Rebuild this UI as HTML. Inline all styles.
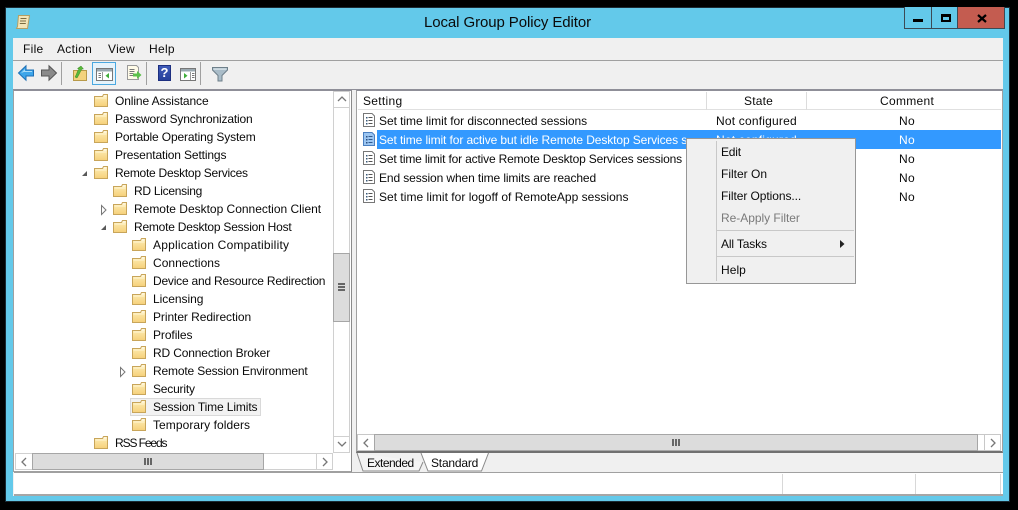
<!DOCTYPE html>
<html><head><meta charset="utf-8"><style>
html,body{margin:0;padding:0;background:#000;width:1018px;height:510px;overflow:hidden}
body{position:relative;font:12px "Liberation Sans",sans-serif;color:#000}
.a{position:absolute;box-sizing:border-box}
.t{position:absolute;white-space:nowrap;line-height:16px;letter-spacing:.3px;color:#0a0a0a}
svg{position:absolute;overflow:visible}
</style></head><body>
<svg width="0" height="0" style="position:absolute">
<defs>
<linearGradient id="fg" x1="0" y1="0" x2="0" y2="1"><stop offset="0" stop-color="#fdeeb8"/><stop offset="1" stop-color="#f6d07a"/></linearGradient>
<symbol id="f" viewBox="0 0 14 13"><path d="M.5 2.500h8l1-2h4v12H.5z" fill="url(#fg)" stroke="#c8a55a"/><path d="M1.500 3.500h11v1h-11z" fill="#fff6d4"/><path d="M9.500 1.500h3v1h-3z" fill="#fff"/></symbol>
<symbol id="d" viewBox="0 0 12 14"><path d="M.5.500h8.500l2.500 2.500v10.500H.5z" fill="#fff" stroke="#777"/><path d="M3 4h1.500v1.500H3zM3 7h1.500v1.500H3zM3 10h1.500v1.500H3z" fill="#3a5a7a"/><path d="M5.500 4.500h4M5.500 7.500h4M5.500 10.500h4" stroke="#555"/></symbol>
</defs></svg>

<!-- window -->
<div class="a" style="left:5px;top:7px;width:1005px;height:495px;background:#63c9ea;border:1px solid #1b2a33"></div>
<svg style="left:15px;top:15px" width="16" height="16" viewBox="0 0 16 16"><path d="M3.500.5h11l-2 13h-11l1-2z" fill="#f3e5b8" stroke="#b59f63"/><path d="M5.500 3.500h6M5 6h6M4.800 8.500h6" stroke="#7c6c40"/></svg>
<div class="t" style="left:424px;top:14px;font-size:15px;line-height:18px;letter-spacing:-.09px">Local Group Policy Editor</div>

<!-- caption buttons -->
<div class="a" style="left:904px;top:7px;width:28px;height:22px;background:#63c9ea;border:1px solid #3c4a55;border-top:0"></div>
<div class="a" style="left:931px;top:7px;width:27px;height:22px;background:#63c9ea;border:1px solid #3c4a55;border-top:0"></div>
<div class="a" style="left:958px;top:7px;width:47px;height:22px;background:#c45c50;border:1px solid #3c4a55;border-top:0;border-left:0"></div>
<div class="a" style="left:913px;top:19px;width:10px;height:3px;background:#000"></div>
<div class="a" style="left:941px;top:14px;width:10px;height:8px;border:2px solid #000;border-top-width:3px"></div>
<svg style="left:977px;top:14px" width="10" height="9"><path d="M1 1l8 7M9 1l-8 7" stroke="#000" stroke-width="2.200"/></svg>

<!-- client -->
<div class="a" style="left:13px;top:38px;width:990px;height:458px;background:#f0f0f0"></div>
<div class="t" style="left:23px;top:41px">File</div>
<div class="t" style="left:57px;top:41px">Action</div>
<div class="t" style="left:108px;top:41px">View</div>
<div class="t" style="left:149px;top:41px">Help</div>
<div class="a" style="left:13px;top:60px;width:990px;height:1px;background:#a0a0a0"></div>
<div class="a" style="left:13px;top:89px;width:990px;height:1px;background:#8f8f98"></div>

<!-- toolbar -->
<svg style="left:18px;top:65px" width="16" height="16"><path d="M.5 8L8 .8V5h7.500v6H8v4.200z" fill="#3ea6ea" stroke="#1d6fb5"/><path d="M3 8l4-4v2h7v1H6z" fill="#a8dcf8"/></svg>
<svg style="left:41px;top:65px" width="16" height="16"><path d="M15.500 8L8 .8V5H.5v6H8v4.200z" fill="#8a8a8a" stroke="#555"/></svg>
<div class="a" style="left:61px;top:62px;width:1px;height:23px;background:#a0a0a0"></div>
<svg style="left:73px;top:65px" width="14" height="16"><path d="M.5 5.500h13v10H.5z" fill="#f3d27c" stroke="#b89a4a"/><path d="M2 12C4 9 4 6 6 4L4.500 3.500 8 1l2.500 3L9 4C7.500 6 6.500 9 4 13z" fill="#57b83a" stroke="#3a8a22" stroke-width=".5"/></svg>
<div class="a" style="left:92px;top:62px;width:24px;height:23px;background:#e5f3fb;border:1px solid #4aa8e0"></div>
<svg style="left:96px;top:68px" width="17" height="13"><path d="M.5.500h16v12H.5z" fill="#fff" stroke="#777"/><path d="M1 1h15v2.500H1z" fill="#9aa8b0"/><path d="M6.500 4v8" stroke="#999"/><path d="M2.500 5.500h2.500M2.500 7.500h2.500M2.500 9.500h2.500" stroke="#777"/><path d="M13 5v5.500L9.500 7.800z" fill="#3fae3a"/></svg>
<svg style="left:126px;top:65px" width="16" height="16"><path d="M1.500.5h9l2 2v12h-11z" fill="#fffbe8" stroke="#999"/><path d="M3.500 4.500h5M3.500 6.500h5M3.500 8.500h4M3.500 10.500h4" stroke="#777"/><path d="M7 8.500h4V6l4.500 4L11 14v-2.500H7z" fill="#5cc04a"/></svg>
<div class="a" style="left:146px;top:62px;width:1px;height:23px;background:#a0a0a0"></div>
<div class="a" style="left:158px;top:65px;width:13px;height:16px;background:linear-gradient(#3f5bb8,#27409a);border:1px solid #1d2f80;color:#fff;font:bold 13px/14px 'Liberation Sans',sans-serif;text-align:center">?</div>
<svg style="left:180px;top:68px" width="16" height="13"><path d="M.5.500h15v12H.5z" fill="#fff" stroke="#777"/><path d="M1 1h14v2.500H1z" fill="#9aa8b0"/><path d="M10.500 4v8" stroke="#999"/><path d="M12 5.500h2.500M12 7.500h2.500M12 9.500h2.500" stroke="#777"/><path d="M4 5v5.500L7.500 7.800z" fill="#3fae3a"/></svg>
<div class="a" style="left:200px;top:62px;width:1px;height:23px;background:#a0a0a0"></div>
<svg style="left:212px;top:67px" width="16" height="15"><path d="M.5.500h15v2.500L10 8.500v5.500H6V8.500L.5 3z" fill="#a9bcc8" stroke="#6e7f8a"/><path d="M1.500 1.500h13v1.200h-13z" fill="#dfe7ec"/></svg>

<!-- left pane -->
<div class="a" style="left:13px;top:90px;width:339px;height:382px;background:#fff;border:1px solid #a0a0a0;border-top-color:#8f8f98;border-right-color:#8a8a8a"></div>
<div class="a" style="left:130px;top:398px;width:131px;height:18px;background:#f2f2f2;border:1px solid #d9d9d9"></div>

<svg style="left:94px;top:94px" width="14" height="13"><use href="#f"/></svg><div class="t" style="left:115px;top:93px;letter-spacing:-.11px">Online Assistance</div>
<svg style="left:94px;top:112px" width="14" height="13"><use href="#f"/></svg><div class="t" style="left:115px;top:111px;letter-spacing:-.16px">Password Synchronization</div>
<svg style="left:94px;top:130px" width="14" height="13"><use href="#f"/></svg><div class="t" style="left:115px;top:129px;letter-spacing:-.14px">Portable Operating System</div>
<svg style="left:94px;top:148px" width="14" height="13"><use href="#f"/></svg><div class="t" style="left:115px;top:147px;letter-spacing:-.13px">Presentation Settings</div>
<svg style="left:94px;top:166px" width="14" height="13"><use href="#f"/></svg><div class="t" style="left:115px;top:165px;letter-spacing:-.26px">Remote Desktop Services</div>
<svg style="left:113px;top:184px" width="14" height="13"><use href="#f"/></svg><div class="t" style="left:134px;top:183px;letter-spacing:-.28px">RD Licensing</div>
<svg style="left:113px;top:202px" width="14" height="13"><use href="#f"/></svg><div class="t" style="left:134px;top:201px;letter-spacing:-.01px">Remote Desktop Connection Client</div>
<svg style="left:113px;top:220px" width="14" height="13"><use href="#f"/></svg><div class="t" style="left:134px;top:219px;letter-spacing:-.22px">Remote Desktop Session Host</div>
<svg style="left:132px;top:238px" width="14" height="13"><use href="#f"/></svg><div class="t" style="left:153px;top:237px;letter-spacing:.22px">Application Compatibility</div>
<svg style="left:132px;top:256px" width="14" height="13"><use href="#f"/></svg><div class="t" style="left:153px;top:255px;letter-spacing:.03px">Connections</div>
<svg style="left:132px;top:274px" width="14" height="13"><use href="#f"/></svg><div class="t" style="left:153px;top:273px;letter-spacing:-.21px">Device and Resource Redirection</div>
<svg style="left:132px;top:292px" width="14" height="13"><use href="#f"/></svg><div class="t" style="left:153px;top:291px;letter-spacing:-.03px">Licensing</div>
<svg style="left:132px;top:310px" width="14" height="13"><use href="#f"/></svg><div class="t" style="left:153px;top:309px;letter-spacing:-.07px">Printer Redirection</div>
<svg style="left:132px;top:328px" width="14" height="13"><use href="#f"/></svg><div class="t" style="left:153px;top:327px;letter-spacing:-.08px">Profiles</div>
<svg style="left:132px;top:346px" width="14" height="13"><use href="#f"/></svg><div class="t" style="left:153px;top:345px;letter-spacing:-.15px">RD Connection Broker</div>
<svg style="left:132px;top:364px" width="14" height="13"><use href="#f"/></svg><div class="t" style="left:153px;top:363px;letter-spacing:-.16px">Remote Session Environment</div>
<svg style="left:132px;top:382px" width="14" height="13"><use href="#f"/></svg><div class="t" style="left:153px;top:381px;letter-spacing:-.2px">Security</div>
<svg style="left:132px;top:400px" width="14" height="13"><use href="#f"/></svg><div class="t" style="left:153px;top:399px;letter-spacing:-.12px">Session Time Limits</div>
<svg style="left:132px;top:418px" width="14" height="13"><use href="#f"/></svg><div class="t" style="left:153px;top:417px;letter-spacing:.06px">Temporary folders</div>
<svg style="left:94px;top:436px" width="14" height="13"><use href="#f"/></svg><div class="t" style="left:115px;top:435px;letter-spacing:-1.100px">RSS Feeds</div>

<svg style="left:81px;top:170px" width="7" height="7"><path d="M6 1v5H1z" fill="#595959"/></svg>
<svg style="left:100px;top:205px" width="7" height="10"><path d="M1.500 .5l4.500 4.500-4.500 4.500z" fill="#fff" stroke="#777"/></svg>
<svg style="left:100px;top:224px" width="7" height="7"><path d="M6 1v5H1z" fill="#595959"/></svg>
<svg style="left:119px;top:367px" width="7" height="10"><path d="M1.500 .5l4.500 4.500-4.500 4.500z" fill="#fff" stroke="#777"/></svg>

<!-- tree vertical scrollbar -->
<div class="a" style="left:333px;top:91px;width:17px;height:362px;background:#fff;border-left:1px solid #d0d0d0;border-right:1px solid #d0d0d0"></div>
<div class="a" style="left:333px;top:91px;width:17px;height:17px;border:1px solid #d0d0d0;background:#fff"></div>
<div class="a" style="left:333px;top:436px;width:17px;height:17px;border:1px solid #d0d0d0;background:#fff"></div>
<svg style="left:337px;top:96px" width="10" height="6"><path d="M1 5l4-4 4 4" fill="none" stroke="#777" stroke-width="1.300"/></svg>
<svg style="left:337px;top:441px" width="10" height="6"><path d="M1 1l4 4 4-4" fill="none" stroke="#777" stroke-width="1.300"/></svg>
<div class="a" style="left:333px;top:253px;width:17px;height:69px;background:#dcdcdc;border:1px solid #a6a6a6"></div>
<div class="a" style="left:338px;top:283px;width:7px;height:2px;background:#666"></div>
<div class="a" style="left:338px;top:286px;width:7px;height:2px;background:#666"></div>
<div class="a" style="left:338px;top:289px;width:7px;height:2px;background:#666"></div>

<!-- tree horizontal scrollbar -->
<div class="a" style="left:15px;top:453px;width:318px;height:17px;background:#fff;border:1px solid #d0d0d0"></div>
<div class="a" style="left:15px;top:453px;width:18px;height:17px;border:1px solid #d0d0d0"></div>
<div class="a" style="left:316px;top:453px;width:17px;height:17px;border:1px solid #d0d0d0"></div>
<div class="a" style="left:32px;top:453px;width:232px;height:17px;background:#dcdcdc;border:1px solid #a6a6a6"></div>
<div class="a" style="left:144px;top:458px;width:2px;height:7px;background:#666"></div>
<div class="a" style="left:147px;top:458px;width:2px;height:7px;background:#666"></div>
<div class="a" style="left:150px;top:458px;width:2px;height:7px;background:#666"></div>
<svg style="left:21px;top:457px" width="6" height="10"><path d="M5 1L1 5l4 4" fill="none" stroke="#777" stroke-width="1.300"/></svg>
<svg style="left:322px;top:457px" width="6" height="10"><path d="M1 1l4 4-4 4" fill="none" stroke="#777" stroke-width="1.300"/></svg>

<!-- right pane -->
<div class="a" style="left:356px;top:90px;width:647px;height:363px;background:#fff;border:1px solid #a0a0a0;border-bottom:2px solid #707070;border-top-color:#8f8f98"></div>
<div class="a" style="left:358px;top:109px;width:643px;height:1px;background:#e0e0e0"></div>
<div class="a" style="left:706px;top:92px;width:1px;height:18px;background:#dcdcdc"></div>
<div class="a" style="left:806px;top:92px;width:1px;height:18px;background:#dcdcdc"></div>
<div class="t" style="left:363px;top:93px">Setting</div>
<div class="t" style="left:744px;top:93px;letter-spacing:.2px">State</div>
<div class="t" style="left:880px;top:93px">Comment</div>

<div class="a" style="left:377px;top:130px;width:624px;height:19px;background:#3399ff"></div>

<svg style="left:363px;top:113px" width="12" height="14"><use href="#d"/></svg>
<div class="t" style="left:379px;top:113px;letter-spacing:-.05px">Set time limit for disconnected sessions</div>
<div class="t" style="left:716px;top:113px;letter-spacing:.2px">Not configured</div>
<div class="t" style="left:899px;top:113px">No</div>

<svg style="left:363px;top:132px" width="12" height="14"><path d="M.5.500h8.500l2.500 2.500v10.500H.5z" fill="#9cc6f2" stroke="#4a7fc0"/><path d="M3 4h1.500v1.500H3zM3 7h1.500v1.500H3zM3 10h1.500v1.500H3z" fill="#2a4f80"/><path d="M5.500 4.500h4M5.500 7.500h4M5.500 10.500h4" stroke="#2f5a90"/></svg>
<div class="t" style="left:379px;top:132px;color:#fff;width:310px;overflow:hidden;letter-spacing:-.1px">Set time limit for active but idle Remote Desktop Services sessions</div>
<div class="t" style="left:716px;top:132px;color:#fff;letter-spacing:.2px">Not configured</div>
<div class="t" style="left:899px;top:132px;color:#fff">No</div>

<svg style="left:363px;top:151px" width="12" height="14"><use href="#d"/></svg>
<div class="t" style="left:379px;top:151px;letter-spacing:-.17px">Set time limit for active Remote Desktop Services sessions</div>
<div class="t" style="left:899px;top:151px">No</div>

<svg style="left:363px;top:170px" width="12" height="14"><use href="#d"/></svg>
<div class="t" style="left:379px;top:170px;letter-spacing:-.11px">End session when time limits are reached</div>
<div class="t" style="left:899px;top:170px">No</div>

<svg style="left:363px;top:189px" width="12" height="14"><use href="#d"/></svg>
<div class="t" style="left:379px;top:189px;letter-spacing:.02px">Set time limit for logoff of RemoteApp sessions</div>
<div class="t" style="left:899px;top:189px">No</div>

<!-- right h scrollbar -->
<div class="a" style="left:357px;top:434px;width:644px;height:17px;background:#fff;border:1px solid #c8c8c8"></div>
<div class="a" style="left:374px;top:434px;width:604px;height:17px;background:#dcdcdc;border:1px solid #a6a6a6"></div>
<div class="a" style="left:984px;top:434px;width:17px;height:17px;border:1px solid #c8c8c8"></div>
<div class="a" style="left:672px;top:439px;width:2px;height:7px;background:#666"></div>
<div class="a" style="left:675px;top:439px;width:2px;height:7px;background:#666"></div>
<div class="a" style="left:678px;top:439px;width:2px;height:7px;background:#666"></div>
<svg style="left:363px;top:438px" width="6" height="10"><path d="M5 1L1 5l4 4" fill="none" stroke="#777" stroke-width="1.300"/></svg>
<svg style="left:990px;top:438px" width="6" height="10"><path d="M1 1l4 4 -4 4" fill="none" stroke="#777" stroke-width="1.300"/></svg>

<!-- tabs -->
<svg style="left:355px;top:453px" width="140" height="19"><path d="M2 0l6 18h56l4-9" fill="#f4f4f4" stroke="#8a8a8a"/><path d="M66 0l7 18h53.500l7-18z" fill="#fff"/><path d="M66 0l7 18h53.500l7-18" fill="none" stroke="#8a8a8a"/></svg>
<div class="t" style="left:367px;top:455px;letter-spacing:-.5px">Extended</div>
<div class="t" style="left:431px;top:455px;letter-spacing:-.2px">Standard</div>

<!-- status bar -->
<div class="a" style="left:14px;top:472px;width:989px;height:24px;background:#fff;border-top:1px solid #a0a0a0;border-bottom:2px solid #a6a6a6"></div>
<div class="a" style="left:782px;top:474px;width:1px;height:20px;background:#d8d8d8"></div>
<div class="a" style="left:915px;top:474px;width:1px;height:20px;background:#d8d8d8"></div>
<div class="a" style="left:1000px;top:474px;width:1px;height:20px;background:#d8d8d8"></div>

<!-- context menu -->
<div class="a" style="left:686px;top:138px;width:170px;height:146px;background:#f0f0f0;border:1px solid #979797"></div>
<div class="a" style="left:716px;top:141px;width:1px;height:140px;background:#c8c8c8"></div>
<div class="a" style="left:717px;top:230px;width:137px;height:1px;background:#c8c8c8"></div>
<div class="a" style="left:717px;top:256px;width:137px;height:1px;background:#c8c8c8"></div>
<div class="t" style="left:721px;top:144px;letter-spacing:-.2px">Edit</div>
<div class="t" style="left:721px;top:166px;letter-spacing:0">Filter On</div>
<div class="t" style="left:721px;top:188px;letter-spacing:-.07px">Filter Options...</div>
<div class="t" style="left:721px;top:210px;color:#7a7a7a;letter-spacing:-.03px">Re-Apply Filter</div>
<div class="t" style="left:721px;top:236px;letter-spacing:-.14px">All Tasks</div>
<div class="t" style="left:721px;top:262px;letter-spacing:.05px">Help</div>
<svg style="left:840px;top:240px" width="5" height="8"><path d="M0 0l4.500 4L0 8z" fill="#222"/></svg>
</body></html>
